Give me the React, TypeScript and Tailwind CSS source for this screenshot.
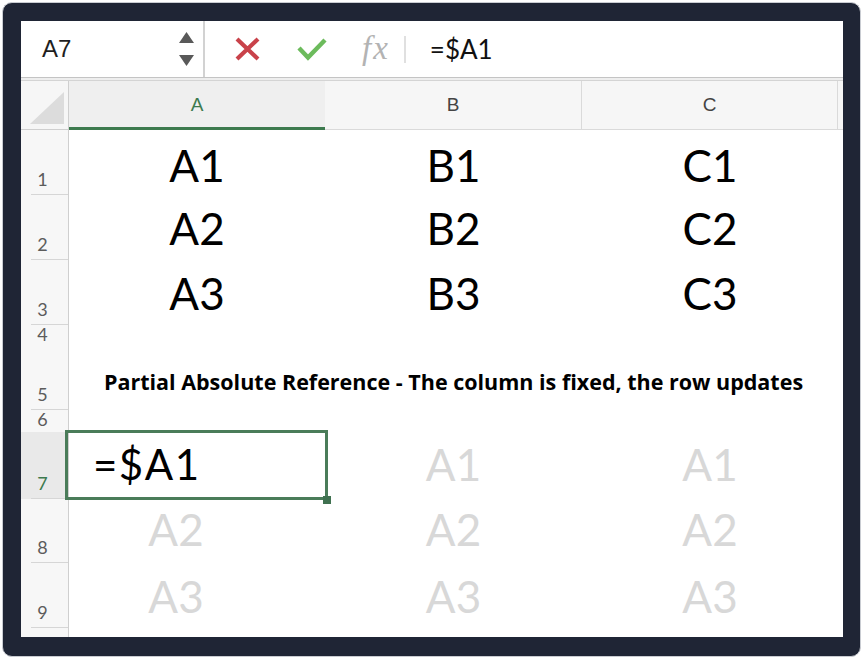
import React from 'react';

const LATO = "font-['Lato','Open_Sans',sans-serif]";

interface RowProps {
  label: string;
  h: string;
  active?: boolean;
  children?: React.ReactNode;
}

function SheetRow({ label, h, active = false, children }: RowProps) {
  return (
    <div className={`flex shrink-0 ${h}`}>
      <div
        className={`w-[48px] shrink-0 flex flex-col border-r border-[#cfcfcf] overflow-hidden ${
          active ? 'bg-[#e9e9e9]' : 'bg-[#f7f7f7]'
        }`}
      >
        <div
          className={`flex-1 flex items-end justify-center pb-[6px] pr-[4px] text-[18px] leading-none ${LATO} ${
            active ? 'text-[#3d7a4e]' : 'text-[#5c5c5c]'
          }`}
        >
          {label}
        </div>
        <div className="ml-[10px] h-px bg-[#d6d6d6]" />
      </div>
      <div className="flex-1 flex">{children}</div>
    </div>
  );
}

function Cell({
  text,
  w,
  tone = 'black',
  pb = 'pb-[10px]',
  shift = '',
}: {
  text: string;
  w: string;
  tone?: 'black' | 'gray';
  pb?: string;
  shift?: string;
}) {
  return (
    <div
      className={`${w} shrink-0 flex items-end justify-center ${pb} ${shift} text-[44px] leading-none ${LATO} ${
        tone === 'black' ? 'text-black' : 'text-[#d8d8d8]'
      }`}
    >
      {text}
    </div>
  );
}

const COLS = ['w-[256px]', 'w-[257px]', 'w-[256px]'];

export default function App() {
  return (
    <div className="w-[864px] h-[659px] bg-white pt-[2px] pl-[2px]">
      <div className="w-[859px] h-[655px] bg-[#1f2535] rounded-[10px] border border-[#c9ccd2] pt-[18px] pl-[18px] pr-[17px] pb-[19px]">
        <div className="w-[822px] h-[616px] bg-white overflow-hidden flex flex-col">
          {/* Formula bar */}
          <div className="h-[57px] shrink-0 flex items-center border-b border-[#c4c4c4]">
            <div className="w-[184px] h-full flex items-center border-r-2 border-[#d2d2d2] pl-[21px] pr-[9px]">
              <span className="flex-1 text-[24px] text-[#1e1e1e] font-['Liberation_Sans',Arial,sans-serif]">
                A7
              </span>
              <div className="flex flex-col gap-[12px]">
                <svg width="15" height="11" viewBox="0 0 15 11">
                  <polygon points="7.5,0 15,11 0,11" fill="#595959" />
                </svg>
                <svg width="15" height="11" viewBox="0 0 15 11">
                  <polygon points="0,0 15,0 7.5,11" fill="#595959" />
                </svg>
              </div>
            </div>
            <svg className="ml-[30px]" width="25" height="24" viewBox="0 0 25 24">
              <path d="M2 2 L23 22 M23 2 L2 22" stroke="#c9424a" strokeWidth="4.2" />
            </svg>
            <svg className="ml-[37px]" width="30" height="24" viewBox="0 0 30 24">
              <polyline
                points="2,11 11,20.5 28,3"
                fill="none"
                stroke="#6cbb5c"
                strokeWidth="4.4"
              />
            </svg>
            <span className="ml-[35px] text-[33px] italic tracking-[2px] text-[#b3b3b3] font-['Liberation_Serif',serif] leading-none pb-[2px]">
              fx
            </span>
            <div className="ml-[14px] w-[2px] h-[27px] bg-[#e0e0e0]" />
            <span className={`ml-[24px] text-[26px] text-[#111] ${LATO}`}>=$A1</span>
          </div>
          <div className="h-[3px] shrink-0 bg-[#eeeeee] border-b border-[#d4d4d4]" />

          {/* Column headers */}
          <div className="h-[49px] shrink-0 flex bg-[#f6f6f6]">
            <div className="w-[48px] shrink-0 border-r border-b border-[#cfcfcf] flex items-end justify-end pr-[4px] pb-[5px]">
              <svg width="34" height="32" viewBox="0 0 34 32">
                <polygon points="0,32 34,32 34,0" fill="#dcdcdc" />
              </svg>
            </div>
            <div className="w-[256px] shrink-0 flex items-center justify-center bg-[#efefef] border-b-[3px] border-[#3d7a4e] text-[19px] text-[#3d7a4e] font-['Liberation_Sans',Arial,sans-serif] pt-[2px]">
              A
            </div>
            <div className="w-[257px] shrink-0 flex items-center justify-center border-r border-b border-[#dadada] text-[19px] text-[#444] font-['Liberation_Sans',Arial,sans-serif]">
              B
            </div>
            <div className="w-[256px] shrink-0 flex items-center justify-center border-r border-b border-[#dadada] text-[19px] text-[#444] font-['Liberation_Sans',Arial,sans-serif]">
              C
            </div>
            <div className="flex-1 border-b border-[#dadada]" />
          </div>

          {/* Grid rows */}
          <SheetRow label="1" h="h-[65px]">
            {['A1', 'B1', 'C1'].map((t, i) => (
              <Cell key={t} text={t} w={COLS[i]} pb="pb-[8px]" />
            ))}
          </SheetRow>
          <SheetRow label="2" h="h-[65px]">
            {['A2', 'B2', 'C2'].map((t, i) => (
              <Cell key={t} text={t} w={COLS[i]} />
            ))}
          </SheetRow>
          <SheetRow label="3" h="h-[65px]">
            {['A3', 'B3', 'C3'].map((t, i) => (
              <Cell key={t} text={t} w={COLS[i]} />
            ))}
          </SheetRow>
          <SheetRow label="4" h="h-[20px]" />
          <SheetRow label="5" h="h-[65px]">
            <div className="w-[769px] flex items-end justify-center pb-[18px] text-[21.5px] font-bold leading-none text-black font-['Open_Sans','Lato',sans-serif]">
              Partial Absolute Reference - The column is fixed, the row updates
            </div>
          </SheetRow>
          <SheetRow label="6" h="h-[22px]" />
          <SheetRow label="7" h="h-[67px]" active>
            <div className="relative w-[256px] shrink-0 flex items-end pl-[24px] pb-[14px]">
              <span className={`text-[42px] leading-none tracking-[1.5px] text-black ${LATO}`}>=$A1</span>
              <div className="absolute left-[-4px] right-[-3px] top-[-2px] bottom-[-1px] border-[3px] border-[#4a7c59]" />
              <div className="absolute right-[-6px] bottom-[-5px] w-[8px] h-[8px] bg-[#3f7150]" />
            </div>
            <Cell text="A1" w={COLS[1]} tone="gray" pb="pb-[13px]" />
            <Cell text="A1" w={COLS[2]} tone="gray" pb="pb-[13px]" />
          </SheetRow>
          <SheetRow label="8" h="h-[64px]">
            <Cell text="A2" w={COLS[0]} tone="gray" pb="pb-[12px]" shift="pr-[42px]" />
            <Cell text="A2" w={COLS[1]} tone="gray" pb="pb-[12px]" />
            <Cell text="A2" w={COLS[2]} tone="gray" pb="pb-[12px]" />
          </SheetRow>
          <SheetRow label="9" h="h-[65px]">
            <Cell text="A3" w={COLS[0]} tone="gray" shift="pr-[42px]" />
            <Cell text="A3" w={COLS[1]} tone="gray" />
            <Cell text="A3" w={COLS[2]} tone="gray" />
          </SheetRow>
          <SheetRow label="" h="h-[30px]" />
        </div>
      </div>
    </div>
  );
}
